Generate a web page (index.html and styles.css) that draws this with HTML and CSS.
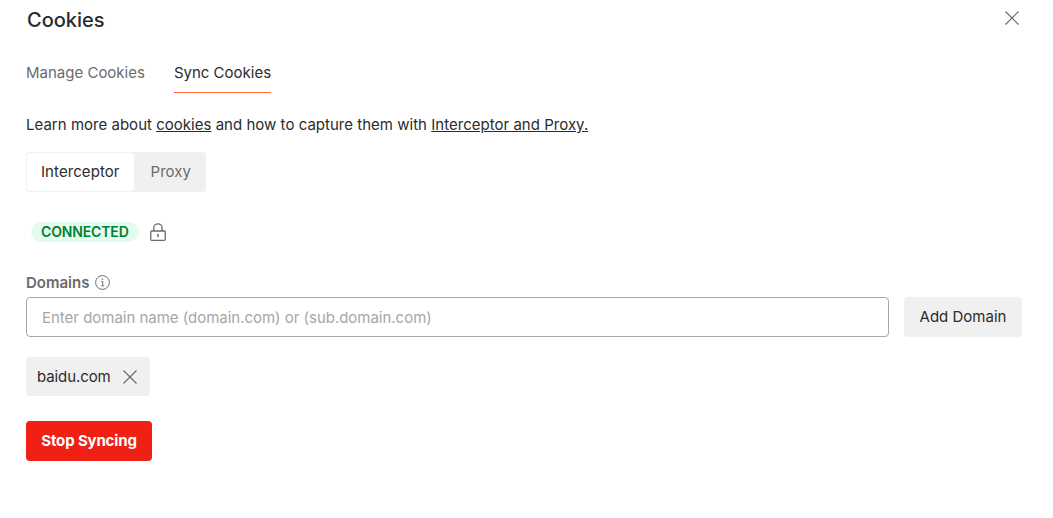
FILE: index.html
```html
<!DOCTYPE html>
<html lang="en">
<head>
    <meta charset="UTF-8">
    <meta name="viewport" content="width=device-width, initial-scale=1.0">
    <title>Cookies</title>
    <link rel="stylesheet" href="styles.css">
</head>
<body>
    <div class="modal">
        <div class="modal-header">
            <h2 class="modal-title">Cookies</h2>
            <button class="close-btn" aria-label="Close">
                <svg width="16" height="16" viewBox="0 0 16 16"><path d="M1.5 1.5l13 13M14.5 1.5l-13 13" stroke="#6b6b6b" stroke-width="1.2" fill="none"/></svg>
            </button>
        </div>

        <div class="tabs">
            <a class="tab">Manage Cookies</a>
            <a class="tab active">Sync Cookies</a>
        </div>

        <p class="learn">Learn more about <a href="#">cookies</a> and how to capture them with <a href="#">Interceptor and Proxy.</a></p>

        <div class="segment">
            <div class="segment-item selected">Interceptor</div>
            <div class="segment-item">Proxy</div>
        </div>

        <div class="status">
            <span class="badge">CONNECTED</span>
            <svg class="lock" width="16" height="18" viewBox="0 0 16 18"><rect x=".75" y="8" width="14.500" height="9.300" rx="1" stroke="#6b6b6b" stroke-width="1.300" fill="none"/><path d="M3.800 8V4.600a4.100 3.800 0 0 1 8.200 0V8" stroke="#6b6b6b" stroke-width="1.300" fill="none"/><rect x="7.200" y="11" width="1.600" height="3" fill="#6b6b6b"/></svg>
        </div>

        <div class="domains-label">
            <span>Domains</span>
            <svg width="15" height="15" viewBox="0 0 15 15"><circle cx="7.500" cy="7.500" r="6.900" stroke="#6b6b6b" fill="none"/><path d="M6.200 6.500h1.500v4M6.200 10.800h3" stroke="#6b6b6b" fill="none"/><circle cx="7.500" cy="4.300" r=".8" fill="#6b6b6b"/></svg>
        </div>

        <div class="domain-row">
            <input class="domain-input" type="text" placeholder="Enter domain name (domain.com) or (sub.domain.com)">
            <button class="add-btn">Add Domain</button>
        </div>

        <div class="chips">
            <div class="chip">
                <span class="chip-name">baidu.com</span>
                <svg width="16" height="16" viewBox="0 0 16 16"><path d="M1.500 1.500l13 13M14.500 1.500l-13 13" stroke="#6b6b6b" stroke-width="1.200" fill="none"/></svg>
            </div>
        </div>

        <button class="stop-btn">Stop Syncing</button>
    </div>
</body>
</html>
```

FILE: styles.css
```css
body {
    margin: 0;
    background: #fff;
    font-family: Inter, "Noto Sans", sans-serif;
    font-size: 15px;
    color: #2b2b2b;
}

.modal {
    width: 996px;
    padding: 0 31px 0 26px;
}

.modal-header {
    display: flex;
    justify-content: space-between;
    align-items: center;
    height: 40px;
}

.modal-title {
    margin: 0 0 0 1px;
    font-size: 20px;
    font-weight: 500;
}

.close-btn {
    display: flex;
    background: none;
    border: none;
    padding: 0;
    margin: -4px 2px 0 0;
}

.tabs {
    display: flex;
    gap: 29px;
    margin-top: 12px;
    height: 41px;
}

.tab {
    height: 40px;
    line-height: 41px;
    color: #6b6b6b;
}

.tab.active {
    color: #2b2b2b;
    border-bottom: 1px solid #ff6c37;
}

.learn {
    margin: 22px 0 0;
    line-height: 20px;
    letter-spacing: 0.02px;
}

.learn a {
    color: #2b2b2b;
    text-decoration: underline;
}

.segment {
    display: inline-flex;
    margin-top: 17px;
    height: 40px;
    box-sizing: border-box;
    background: #f0f0f0;
    border-radius: 4px;
    padding: 1px 0 1px 1px;
}

.segment-item {
    padding: 0 15px 0 17px;
    line-height: 38px;
    color: #6b6b6b;
}

.segment-item.selected {
    padding: 0 14px;
    background: #fff;
    border-radius: 4px;
    color: #2b2b2b;
    letter-spacing: 0.08px;
}

.status {
    display: flex;
    align-items: center;
    gap: 11px;
    margin: 20px 0 0 5px;
    height: 40px;
}

.badge {
    background: #e5fbee;
    color: #007f31;
    font-size: 14px;
    font-weight: 600;
    line-height: 20px;
    padding: 0 10px;
    border-radius: 10px;
    letter-spacing: -0.15px;
}

.domains-label {
    display: flex;
    align-items: center;
    gap: 6px;
    margin-top: 20px;
    height: 20px;
    font-weight: 600;
    color: #6b6b6b;
}

.domain-row {
    display: flex;
    gap: 15px;
    margin-top: 5px;
}

.domain-input {
    flex: 1;
    height: 40px;
    box-sizing: border-box;
    border: 1px solid #a6a6a6;
    border-radius: 4px;
    padding: 0 15px;
    font-family: inherit;
    font-size: 15px;
    letter-spacing: -0.02px;
}

.domain-input::placeholder {
    color: #a6a6a6;
}

.add-btn {
    width: 118px;
    height: 40px;
    padding: 0 0 2px;
    background: #f0f0f0;
    border: none;
    border-radius: 4px;
    font-family: inherit;
    font-size: 15px;
    color: #2b2b2b;
}

.chips {
    display: flex;
    margin-top: 20px;
}

.chip {
    display: flex;
    align-items: center;
    gap: 11px;
    height: 39px;
    padding: 0 12px 0 11px;
    background: #f0f0f0;
    border-radius: 4px;
}

.chip-name {
    letter-spacing: -0.1px;
}

.stop-btn {
    display: block;
    width: 126px;
    height: 40px;
    margin-top: 25px;
    padding: 0 0 2px;
    background: #f02015;
    border: none;
    border-radius: 4px;
    font-family: inherit;
    font-size: 15px;
    font-weight: 700;
    letter-spacing: -0.15px;
    color: #fff;
}
```
